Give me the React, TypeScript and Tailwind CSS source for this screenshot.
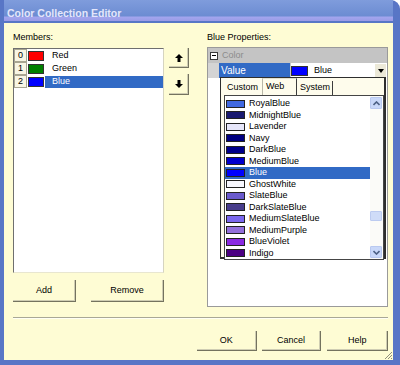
const members = [
  { idx: "0", name: "Red", color: "#ff0000" },
  { idx: "1", name: "Green", color: "#008000" },
  { idx: "2", name: "Blue", color: "#0000ff" },
];

const webColors = [
  ["RoyalBlue", "#4169e1"],
  ["MidnightBlue", "#191970"],
  ["Lavender", "#e6e6fa"],
  ["Navy", "#000080"],
  ["DarkBlue", "#00008b"],
  ["MediumBlue", "#0000cd"],
  ["Blue", "#0000ff"],
  ["GhostWhite", "#f8f8ff"],
  ["SlateBlue", "#6a5acd"],
  ["DarkSlateBlue", "#483d8b"],
  ["MediumSlateBlue", "#7b68ee"],
  ["MediumPurple", "#9370db"],
  ["BlueViolet", "#8a2be2"],
  ["Indigo", "#4b0082"],
];

function Btn({ label, className }: { label: string; className: string }) {
  return (
    <div
      className={`flex items-center justify-center border-r border-b border-[#74735f] shadow-[inset_-1px_-1px_0_#cfcdb3] ${className}`}
    >
      {label}
    </div>
  );
}

function Arrow({ down }: { down?: boolean }) {
  return (
    <svg width="8" height="8" viewBox="0 0 8 8" className={down ? "rotate-180" : ""}>
      <path d="M4 0 L8 4 H5.5 V8 H2.5 V4 H0 Z" fill="#000" />
    </svg>
  );
}

function Chevron({ down }: { down?: boolean }) {
  return (
    <svg width="7" height="5" viewBox="0 0 7 5">
      <polyline
        points={down ? "0.5,1 3.5,4 6.5,1" : "0.5,4 3.5,1 6.5,4"}
        fill="none"
        stroke="#4d6185"
        strokeWidth="1.6"
      />
    </svg>
  );
}

export default function App() {
  return (
    <div className="h-[365px] w-[400px] overflow-hidden bg-white font-['Liberation_Sans',Arial,sans-serif] text-[9px] text-black">
      <div className="flex h-[365px] w-[400px] flex-col rounded-tr-[9px] bg-[#5876c6] pb-[5px] pl-[4px] pr-[7px]">
        {/* title bar */}
        <div className="h-[21px] bg-[linear-gradient(to_bottom,#7f9cdc_0px,#6c8cd2_16px,#a3a5ee_17px,#9a9be6_21px)] pl-[3px] pt-[8px] text-[10.5px] font-bold leading-[11px] text-[#e4e6fb]">
          Color Collection Editor
        </div>
        <div className="h-[2px]" />

        {/* body */}
        <div className="relative flex flex-1 flex-col bg-[#fefcd4] pl-[9px] pr-[5px] pt-[7px]">
          <div className="flex items-start">
            {/* members column */}
            <div className="flex w-[151px] flex-col">
              <div className="h-[14px] leading-[14px]">Members:</div>
              <div className="mt-[4px] h-[225px] border-t border-l border-r border-b border-t-[#6f6f6f] border-l-[#6f6f6f] border-r-[#d6d4c0] border-b-[#e8e6d0] bg-white">
                {members.map((m) => (
                  <div key={m.idx} className="flex h-[13px] items-center">
                    <div className="flex h-[13px] w-[13px] items-center justify-center border border-[#a8a692] bg-[#f8f6e4]">
                      {m.idx}
                    </div>
                    <div
                      className="ml-[1px] h-[10px] w-[16px] border border-[#333]"
                      style={{ background: m.color }}
                    />
                    <div
                      className={`ml-[1px] flex h-[12px] flex-1 items-center pl-[7px] ${
                        m.idx === "2" ? "bg-[#316ac5] text-white" : ""
                      }`}
                    >
                      {m.name}
                    </div>
                  </div>
                ))}
              </div>
              <div className="mt-[7px] flex">
                <Btn label="Add" className="h-[22px] w-[63px]" />
                <Btn label="Remove" className="ml-[15px] h-[22px] w-[73px]" />
              </div>
            </div>

            {/* up / down */}
            <div className="ml-[5px] mt-[18px] flex w-[20px] flex-col">
              <div className="flex h-[20px] items-center justify-center border-r border-b border-[#74735f] shadow-[inset_-1px_-1px_0_#cfcdb3]">
                <Arrow />
              </div>
              <div className="mt-[6px] flex h-[21px] items-center justify-center border-r border-b border-[#74735f] shadow-[inset_-1px_-1px_0_#cfcdb3]">
                <Arrow down />
              </div>
            </div>

            {/* properties column */}
            <div className="ml-[18px] flex w-[181px] flex-col">
              <div className="h-[14px] leading-[14px]">Blue Properties:</div>
              <div className="relative mt-[3px] h-[260px] border border-[#9a9a9a] bg-white">
                <div className="flex h-[15px] items-center bg-[#c4c4c4]">
                  <div className="ml-[2px] flex h-[8px] w-[8px] items-center justify-center border border-[#3a3a3a] bg-white">
                    <div className="h-px w-[4px] bg-black" />
                  </div>
                  <span className="ml-[4px] text-[#8c8c8c]">Color</span>
                </div>
                <div className="flex h-[15px] items-stretch">
                  <div className="w-[11px] bg-[#d4d4d4]" />
                  <div className="flex w-[71px] items-center bg-[#316ac5] pl-[2px] text-[10px] text-white">
                    Value
                  </div>
                  <div className="w-px bg-[#c8c8c8]" />
                  <div className="flex flex-1 items-center">
                    <div className="h-[10px] w-[17px] border border-[#333] bg-[#0000ff]" />
                    <span className="ml-[6px]">Blue</span>
                    <div className="ml-auto mr-[1px] flex h-[13px] w-[11px] items-center justify-center bg-[#ece9d8]">
                      <svg width="6" height="4" viewBox="0 0 6 4">
                        <path d="M0 0 H6 L3 4 Z" fill="#000" />
                      </svg>
                    </div>
                  </div>
                </div>

                {/* dropdown popup */}
                <div className="absolute left-[12px] top-[29px] flex h-[182px] w-[166px] flex-col border border-r-2 border-b-2 border-[#2e2e2e] bg-[#fefcec]">
                  <div className="flex h-[18px] items-end pl-[2px]">
                    <div className="flex h-[14px] w-[39px] items-center justify-center">Custom</div>
                    <div className="h-[17px] w-[35px] border-t border-l border-r border-t-[#e0dfd0] border-l-[#b8b7a8] border-r-[#3c3c3c] pl-[3px] pt-[1px] leading-[12px]">
                      Web
                    </div>
                    <div className="flex h-[14px] w-[36px] items-center border-r border-[#3c3c3c] pl-[3px]">
                      System
                    </div>
                  </div>
                  <div className="ml-[3px] flex flex-1 border border-[#454545] bg-white">
                    <div className="flex-1 overflow-hidden pt-[2px]">
                      {webColors.map(([name, c]) => (
                        <div
                          key={name}
                          className={`flex h-[11.5px] items-center ${
                            name === "Blue" ? "bg-[#316ac5] text-white" : ""
                          }`}
                        >
                          <div
                            className="ml-[1px] h-[8px] w-[19px] border border-[#222]"
                            style={{ background: c }}
                          />
                          <span className="ml-[4px] leading-[11px]">{name}</span>
                        </div>
                      ))}
                    </div>
                    <div className="flex w-[13px] flex-col bg-[#fbfbf8] py-[1px] pr-[1px]">
                      <div className="flex h-[12px] items-center justify-center rounded-[1px] border border-[#b9c9f0] bg-[#c9d8f9]">
                        <Chevron />
                      </div>
                      <div className="mt-[102px] h-[10px] rounded-[1px] border border-[#bccbf0] bg-[#cfdcf8]" />
                      <div className="flex-1" />
                      <div className="flex h-[12px] items-center justify-center rounded-[1px] border border-[#b9c9f0] bg-[#c9d8f9]">
                        <Chevron down />
                      </div>
                    </div>
                  </div>
                </div>
              </div>
            </div>
          </div>

          {/* separator */}
          <div className="mt-[10px] h-px w-[375px] bg-[#a9a896]" />
          <div className="h-px w-[375px] bg-[#fffff4]" />

          {/* dialog buttons */}
          <div className="mt-[12px] flex">
            <Btn label="OK" className="ml-[184px] h-[20px] w-[60px]" />
            <Btn label="Cancel" className="ml-[5px] h-[20px] w-[60px]" />
            <Btn label="Help" className="ml-[6px] h-[20px] w-[61px]" />
          </div>

          {/* size grip */}
          <svg className="absolute bottom-[1px] right-[1px]" width="8" height="8" viewBox="0 0 8 8">
            <path d="M8 1 L1 8 M8 4 L4 8 M8 7 L7 8" stroke="#8f8e7c" strokeWidth="1" />
          </svg>
        </div>
      </div>
    </div>
  );
}
